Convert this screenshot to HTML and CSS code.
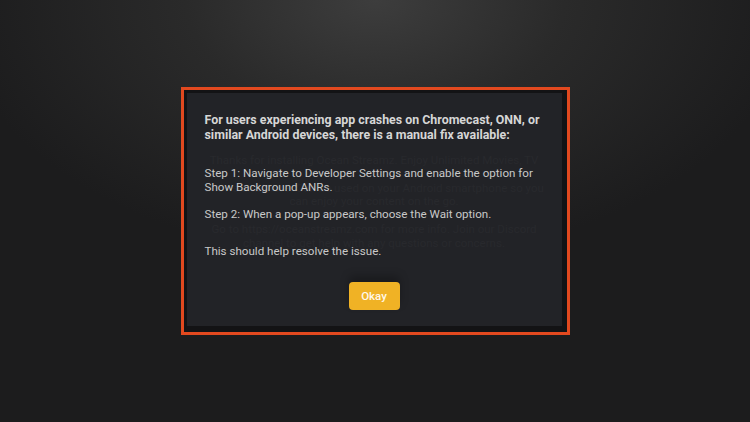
FILE: index.html
```html
<!DOCTYPE html>
<html lang="en">
<head>
    <meta charset="UTF-8">
    <meta name="viewport" content="width=device-width, initial-scale=1.0">
    <title>Ocean Streamz</title>
    <link rel="stylesheet" href="styles.css">
</head>
<body>
    <div class="frame">
        <div class="dialog">
            <!-- welcome text from the dialog underneath, barely showing through -->
            <div class="ghost">
                <p>Thanks for installing Ocean Streamz. Enjoy Unlimited Movies, TV</p>
                <p>&nbsp;</p>
                <p>Shows and more. Can be used on your Android smartphone so you</p>
                <p>can enjoy your content on the go.</p>
                <p>&nbsp;</p>
                <p>Go to https://oceanstreamz.com for more info. Join our Discord</p>
                <p>channel to get help with any questions or concerns.</p>
            </div>

            <h2 class="notice-title">For users experiencing app crashes on Chromecast, ONN, or similar Android devices, there is a manual fix available:</h2>
            <p class="step">Step 1: Navigate to Developer Settings and enable the option for Show Background ANRs.</p>
            <p class="step step-2">Step 2: When a pop-up appears, choose the Wait option.</p>
            <p class="step step-end">This should help resolve the issue.</p>

            <div class="actions">
                <button class="okay-btn">Okay</button>
            </div>
        </div>
    </div>
</body>
</html>
```

FILE: styles.css
```css
html, body {
    height: 100%;
}
body {
    margin: 0;
    font-family: Roboto, "Noto Sans", sans-serif;
    background-color: #1b1b1c;
    background-image: radial-gradient(ellipse 420px 260px at 50% 0%, #3d3d3d 0%, #2a2a2a 45%, #1c1c1d 100%);
    background-repeat: no-repeat;
    display: flex;
    align-items: center;
    justify-content: center;
}
.frame {
    width: 389px;
    border: 3px solid #e2491f;
    background: #131315;
    padding: 3px 5px 6px 3px;
    box-sizing: border-box;
}
.dialog {
    position: relative;
    background: #222327;
    padding: 19px 12px 16px 18px;
}
.ghost {
    position: absolute;
    left: 0;
    right: 0;
    top: 61px;
    text-align: center;
    font-size: 11.5px;
    line-height: 13.8px;
    color: #28292d;
}
.ghost p {
    margin: 0;
}
.notice-title {
    position: relative;
    margin: 0;
    font-size: 12.4px;
    line-height: 15px;
    font-weight: 700;
    color: #d6d6d6;
}
.step {
    position: relative;
    margin: 25px 0 0;
    font-size: 11.6px;
    line-height: 13.5px;
    color: #c9c9c9;
}
.step-2 {
    margin-top: 14px;
}
.step-end {
    margin-top: 23px;
}
.actions {
    display: flex;
    justify-content: center;
    margin-top: 24px;
    padding-right: 6px;
}
.okay-btn {
    width: 51px;
    height: 28px;
    padding: 0;
    border: none;
    border-radius: 4px;
    background: #f0b225;
    color: #fff8ea;
    font-family: Roboto, sans-serif;
    font-size: 11.5px;
    font-weight: 500;
    box-shadow: 0 -6px 8px rgba(0, 0, 0, 0.25);
}
```
